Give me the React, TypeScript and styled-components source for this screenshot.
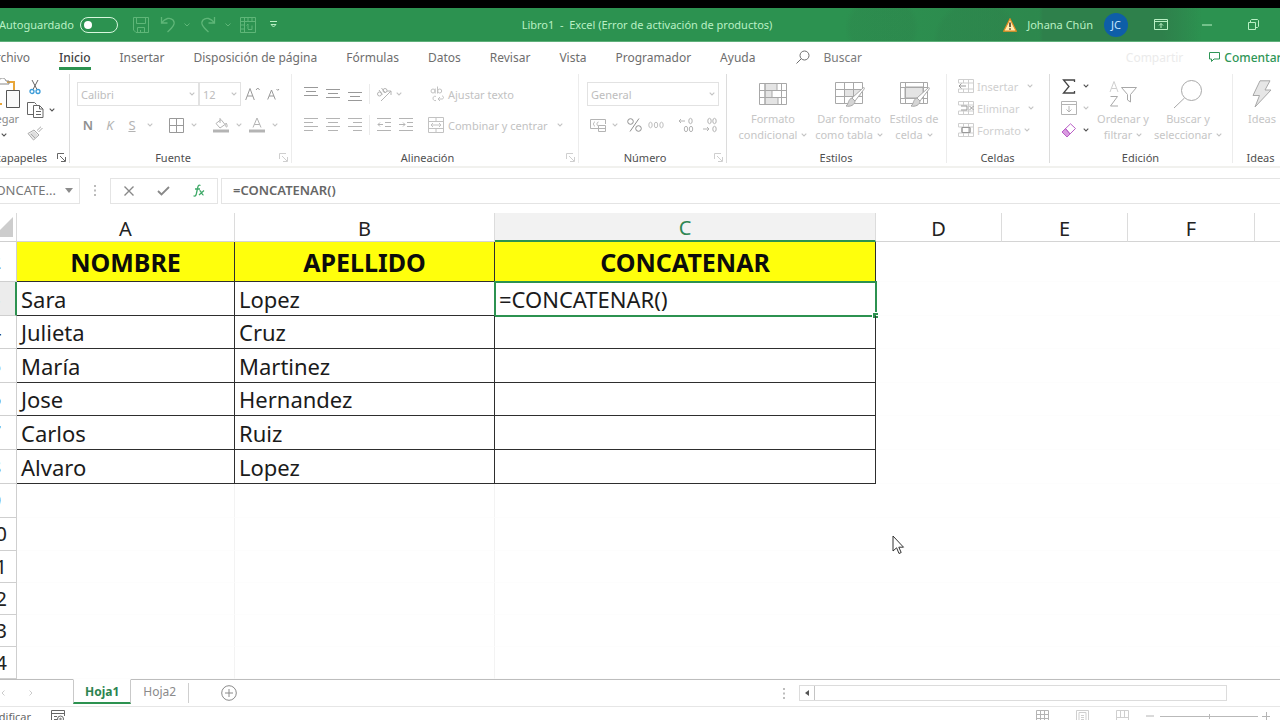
import React from 'react';
import styled, { createGlobalStyle, css } from 'styled-components';

const GREEN = '#2c9250';
const UI = '"Noto Sans", "Open Sans", sans-serif';

const Global = createGlobalStyle`
  *, *::before, *::after { box-sizing: border-box; }
  body { margin: 0; background: #fff; overflow: hidden; font-family: ${UI}; font-size: 12px; color: #555; }
  button, input, select { font: inherit; color: inherit; background: none; border: 0; padding: 0; margin: 0; }
  a { color: inherit; text-decoration: none; }
  svg { display: block; flex: none; }
`;

/* The window is a little larger than the visible screen and bleeds off its edges. */
const Screen = styled.div`
  height: 100vh;
  overflow: hidden;
  position: relative;
`;
const Window = styled.div`
  display: flex;
  flex-direction: column;
  width: calc(100% + 70px);
  height: calc(100vh + 7px);
  margin-left: -28px;
`;

/* Title bar */
const TopEdge = styled.div`
  flex: none;
  height: 8px;
  background: #000;
`;
const TitleBar = styled.header`
  flex: none;
  display: grid;
  grid-template-columns: 1fr auto 1fr;
  align-items: center;
  height: 34px;
  font-size: 11px;
  color: #b9f0c4;
  border-bottom: 1px solid #5fb07a;
  background:
    radial-gradient(circle at calc(100% - 440px) 20px, rgba(46, 120, 72, 0.2) 31px, transparent 37px),
    radial-gradient(circle at calc(100% - 345px) 34px, rgba(46, 120, 72, 0.2) 38px, transparent 44px),
    linear-gradient(90deg, transparent calc(100% - 283px), #2e804b calc(100% - 279px), #2e804b calc(100% - 160px), transparent calc(100% - 120px)),
    linear-gradient(90deg, ${GREEN} calc(100% - 480px), #2d884d calc(100% - 290px), ${GREEN} calc(100% - 120px));
`;
const QuickAccess = styled.div`
  display: flex;
  align-items: center;
  padding-left: 27px;
`;
const ToggleLabel = styled.label`
  display: flex;
  align-items: center;
  gap: 6px;
  margin-right: 12px;
`;
const Toggle = styled.input`
  appearance: none;
  display: flex;
  align-items: center;
  width: 38px;
  height: 16px;
  padding-left: 3px;
  border: 1px solid #d8f7de;
  border-radius: 8px;
  &::before {
    content: '';
    width: 8px;
    height: 8px;
    border-radius: 50%;
    background: #fff;
  }
`;
const TitleButton = styled.button<{ $w: number; $dim?: boolean }>`
  display: flex;
  align-items: center;
  justify-content: center;
  width: ${p => p.$w}px;
  height: 32px;
  color: ${p => (p.$dim ? '#5fb678' : '#b9f0c4')};
`;
const DocTitle = styled.h1`
  margin: 0;
  font-size: 11px;
  font-weight: 400;
  white-space: pre;
`;
const WindowSide = styled.div`
  display: flex;
  align-items: center;
  justify-content: flex-end;
`;
const User = styled.span`
  margin: 0 11px 0 10px;
`;
const Avatar = styled.span`
  display: flex;
  align-items: center;
  justify-content: center;
  width: 24px;
  height: 24px;
  margin-right: 10px;
  border-radius: 50%;
  background: #0e5ea8;
  color: #c5e4ff;
`;

/* Ribbon tabs */
const TabBar = styled.nav`
  flex: none;
  display: flex;
  align-items: center;
  gap: 29px;
  height: 30px;
  margin-bottom: 2px;
  padding: 0 24px 0 16px;
  color: #6e6e6e;
`;
const Tab = styled.a<{ $active?: boolean }>`
  display: flex;
  align-items: center;
  height: 26px;
  white-space: nowrap;
  border-top: 3px solid transparent;
  border-bottom: 3px solid transparent;
  ${p => p.$active && css`
    color: #3f3f3f;
    font-weight: 500;
    border-bottom-color: ${GREEN};
  `}
`;
const Search = styled.label`
  display: flex;
  align-items: center;
  gap: 13px;
  margin-left: 12px;
`;
const SearchInput = styled.input`
  width: 100px;
  outline: 0;
  &::placeholder { color: #7a7a7a; opacity: 1; }
`;
const TabActions = styled.div`
  display: flex;
  align-items: center;
  gap: 26px;
  margin-left: auto;
`;
const Action = styled.button<{ $faint?: boolean }>`
  display: flex;
  align-items: center;
  gap: 4px;
  color: ${p => (p.$faint ? '#ebebeb' : '#2f9657')};
  font-weight: ${p => (p.$faint ? 400 : 500)};
`;

/* Ribbon */
const Ribbon = styled.section`
  flex: none;
  display: flex;
  height: 94px;
  border-bottom: 2px solid #f1f1ee;
`;
const Group = styled.section<{ $w: number; $soft?: boolean }>`
  display: flex;
  flex-direction: column;
  flex: none;
  width: ${p => p.$w}px;
  height: 89px;
  border-right: 1px solid ${p => (p.$soft ? '#ececec' : '#dcdcdc')};
`;
const GroupBody = styled.div<{ $pad?: number; $gap?: number }>`
  flex: 1;
  display: flex;
  gap: ${p => p.$gap ?? 0}px;
  padding-left: ${p => p.$pad ?? 8}px;
`;
const Caption = styled.footer`
  display: flex;
  align-items: center;
  height: 16px;
  margin-bottom: -2px;
  padding-right: 1px;
  color: #4f4f4f;
`;
const CaptionText = styled.h2`
  flex: 1;
  margin: 0;
  font-size: 11px;
  font-weight: 400;
  text-align: center;
`;
const Stack = styled.div<{ $gap: number; $top: number }>`
  display: flex;
  flex-direction: column;
  gap: ${p => p.$gap}px;
  padding-top: ${p => p.$top}px;
`;
const Row = styled.div`
  display: flex;
  align-items: center;
  height: 22px;
`;
const Tool = styled.button<{ $w?: number; $color?: string; $left?: number }>`
  display: flex;
  align-items: center;
  justify-content: center;
  flex: none;
  width: ${p => p.$w ?? 22}px;
  height: 22px;
  margin-left: ${p => p.$left ?? 0}px;
  color: ${p => p.$color ?? '#b4b4b4'};
`;
const Letter = styled.span<{ $kind?: 'b' | 'i' | 'u' }>`
  font-size: 13px;
  font-weight: ${p => (p.$kind === 'b' ? 600 : 400)};
  font-style: ${p => (p.$kind === 'i' ? 'italic' : 'normal')};
  text-decoration: ${p => (p.$kind === 'u' ? 'underline' : 'none')};
`;
const Wide = styled.button<{ $color?: string }>`
  display: flex;
  align-items: center;
  gap: 3px;
  height: 22px;
  font-size: 11px;
  white-space: nowrap;
  color: ${p => p.$color ?? '#c2c2c2'};
`;
const ChevronBox = styled.span`
  display: flex;
  margin-left: 6px;
`;
const Divider = styled.span`
  width: 1px;
  height: 20px;
  margin: 0 3px;
  background: #ebebeb;
`;
const Picker = styled.label<{ $w: number }>`
  display: flex;
  align-items: center;
  width: ${p => p.$w}px;
  height: 24px;
  border: 1px solid #e2e2e2;
  color: #bdbdbd;
`;
const Select = styled.select`
  flex: 1;
  min-width: 0;
  height: 100%;
  padding-left: 3px;
  appearance: none;
  outline: 0;
  font-size: 11px;
`;
const Arrow = styled.span`
  display: flex;
  margin-right: 3px;
  pointer-events: none;
`;
const Big = styled.button<{ $w: number; $dark?: boolean }>`
  display: flex;
  flex-direction: column;
  align-items: center;
  width: ${p => p.$w}px;
  padding-top: 4px;
  font-size: 11px;
  line-height: 16px;
  white-space: nowrap;
  color: ${p => (p.$dark ? '#8a8a8a' : '#c6c6c6')};
`;
const BigIcon = styled.span`
  display: flex;
  align-items: center;
  justify-content: center;
  height: 32px;
  margin-bottom: 1px;
  color: #a8a8a8;
`;
const BigLine = styled.span`
  display: flex;
  align-items: center;
  gap: 4px;
  height: 16px;
`;

/* Formula bar */
const FormulaBar = styled.section`
  flex: none;
  display: flex;
  align-items: center;
  height: 45px;
  color: #777;
`;
const NameBox = styled.div`
  display: flex;
  align-items: center;
  width: 108px;
  height: 26px;
  padding-right: 6px;
  border: 1px solid #e4e4e4;
`;
const NameInput = styled.input`
  flex: 1;
  min-width: 0;
  height: 24px;
  padding: 0 9px 2px 0;
  text-align: right;
  outline: 0;
  font-size: 13px;
`;
const Grip = styled.span`
  display: flex;
  justify-content: center;
  width: 30px;
`;
const FormulaTools = styled.div`
  display: flex;
  align-items: center;
  justify-content: space-around;
  width: 108px;
  height: 26px;
  border: 1px solid #e4e4e4;
`;
const FormulaInput = styled.input`
  flex: 1;
  height: 26px;
  margin-left: 3px;
  padding: 0 0 2px 11px;
  border: 1px solid #e4e4e4;
  outline: 0;
  font-size: 13px;
  font-weight: 600;
  color: #666;
`;

/* Sheet */
const Sheet = styled.main`
  flex: 1;
  min-height: 0;
  overflow: hidden;
`;
const Grid = styled.table`
  width: 100%;
  table-layout: fixed;
  border-collapse: separate;
  border-spacing: 0;
  font-size: 22px;
  line-height: 28px;
  color: #1b1b1b;
`;
const Col = styled.col<{ $w?: number }>`
  width: ${p => (p.$w ? `${p.$w}px` : 'auto')};
`;
const TR = styled.tr<{ $h: number }>`
  height: ${p => p.$h}px;
`;
const Corner = styled.td`
  padding: 0 3px 4px 0;
  border-right: 1px solid #dadada;
  border-bottom: 1px solid #cfcfcf;
  vertical-align: bottom;
`;
const CornerMark = styled.span`
  display: block;
  width: 20px;
  height: 20px;
  margin-left: auto;
  background: #cdcdcd;
  clip-path: polygon(100% 0, 100% 100%, 0 100%);
`;
const ColHead = styled.th<{ $on?: boolean }>`
  padding: 3px 0 0;
  font-size: 20px;
  line-height: 24px;
  font-weight: 400;
  color: ${p => (p.$on ? '#2f8653' : '#222')};
  background: ${p => (p.$on ? '#f2f2f2' : '#fff')};
  border-right: 1px solid #dcdcdc;
  border-bottom: ${p => (p.$on ? `2px solid ${GREEN}` : '1px solid #d4d4d4')};
`;
const RowHead = styled.th<{ $on?: boolean }>`
  padding: 0 0 0 3px;
  font-size: 20px;
  line-height: 24px;
  font-weight: 400;
  color: ${p => (p.$on ? '#2f8653' : '#222')};
  background: ${p => (p.$on ? '#ececec' : '#fff')};
  border-bottom: 1px solid #cfcfcf;
  border-right: ${p => (p.$on ? `2px solid ${GREEN}` : '1px solid #cfcfcf')};
`;
const Cell = styled.td<{ $boxed?: boolean; $line?: boolean }>`
  position: relative;
  padding: 0 4px;
  white-space: nowrap;
  border-right: 1px solid ${p => (p.$boxed ? '#2e2e2e' : p.$line ? '#f3f3f3' : 'transparent')};
  border-bottom: 1px solid ${p => (p.$boxed ? '#2e2e2e' : '#fdfdfd')};
`;
const HeadCell = styled(Cell)`
  font-size: 25px;
  line-height: 30px;
  font-weight: 700;
  text-align: center;
  color: #0c0c0c;
  background: #ffff0c;
`;
const Selection = styled.span`
  position: absolute;
  inset: -1px -2px -2px -1px;
  border: 2px solid ${GREEN};
  &::after {
    content: '';
    position: absolute;
    right: -3px;
    bottom: -3px;
    width: 5px;
    height: 5px;
    background: ${GREEN};
    outline: 1px solid #fff;
  }
`;
const Pointer = styled.span`
  position: absolute;
  left: 892px;
  top: 535px;
`;

/* Sheet tabs */
const SheetBar = styled.nav`
  flex: none;
  display: flex;
  align-items: center;
  height: 28px;
  border-top: 1px solid #bdbdbd;
  border-bottom: 1px solid #e6e6e6;
  color: #8a8a8a;
`;
const SheetNav = styled.div`
  display: flex;
  gap: 18px;
  width: 101px;
  padding-left: 26px;
`;
const Nav = styled.button`
  display: flex;
  justify-content: center;
  width: 10px;
`;
const AddSheet = styled.button`
  display: flex;
  margin-left: 32px;
`;
const SheetTab = styled.button<{ $active?: boolean }>`
  height: 25px;
  margin-top: -3px;
  padding: 0 11px;
  white-space: nowrap;
  border: 1px solid transparent;
  border-bottom-width: 2px;
  ${p => p.$active && css`
    font-weight: 700;
    color: #2c8450;
    background: #fff;
    border-color: #fff #c9c9c9 ${GREEN};
  `}
`;
const TabEdge = styled.span`
  width: 1px;
  height: 20px;
  background: #cfcfcf;
`;
const Scroller = styled.div`
  display: flex;
  width: 428px;
  height: 16px;
  margin-right: 95px;
  border: 1px solid #dcdcdc;
`;
const ScrollButton = styled.button`
  display: flex;
  align-items: center;
  justify-content: center;
  width: 15px;
  border-right: 1px solid #c4c4c4;
  color: #555;
`;

/* Status bar */
const StatusBar = styled.footer`
  flex: none;
  display: flex;
  align-items: center;
  height: 20px;
  padding: 0 50px 2px 4px;
  color: #666;
  font-size: 11px;
`;
const Mode = styled.span`
  width: 55px;
  text-align: right;
  margin-right: 20px;
`;
const Views = styled.div`
  display: flex;
  align-items: center;
  margin-left: auto;
  color: #bdbdbd;
`;
const Zoom = styled.input`
  appearance: none;
  width: 98px;
  height: 1px;
  margin: 0 2px;
  background: #b9b9b9;
  &::-webkit-slider-thumb {
    appearance: none;
    width: 1px;
    height: 5px;
    background: #b9b9b9;
  }
`;

type IcoProps = { w: number; h?: number; sw?: number; children: React.ReactNode };
const Ico = ({ w, h = w, sw = 1, children }: IcoProps) => (
  <svg width={w} height={h} viewBox={`0 0 ${w} ${h}`} fill="none" stroke="currentColor" strokeWidth={sw} aria-hidden="true">
    {children}
  </svg>
);
const Chevron = ({ dark }: { dark?: boolean }) => (
  <svg width="6" height="4" viewBox="0 0 6 4" fill="none" stroke={dark ? '#555' : '#c4c4c4'} strokeWidth="1.1" aria-hidden="true">
    <path d="M.7.7 3 3 5.3.7" />
  </svg>
);
const Launcher = ({ dark }: { dark?: boolean }) => (
  <Tool $w={14} $color={dark ? '#666' : '#cfcfcf'} aria-label="Más opciones">
    <Ico w={9}><path d="M.5 6V.5H7M3 3l5 5M8.500 4v4.500H4" /></Ico>
  </Tool>
);
const Lines = ({ rows }: { rows: [number, number, number][] }) => (
  <Ico w={14} h={16}>{rows.map(([x, y, len]) => <path key={y} d={`M${x} ${y}.5h${len}`} />)}</Ico>
);
const Brush = () => (
  <g>
    <path d="M30 8c1-1 2 0 1 1.200L22 21l-3-3z" fill="#fff" />
    <path d="M19 18l3 3c0 4-5 6-9 5 3-2 2-7 6-8z" fill="#d5d5d5" />
  </g>
);

const ChevTool = ({ w = 14, dark }: { w?: number; dark?: boolean }) => (
  <Tool $w={w} aria-label="Abrir lista"><Chevron dark={dark} /></Tool>
);

const Clipboard = () => (
  <Group $w={98}>
    <GroupBody $pad={14} $gap={2}>
      <Big $w={36} $dark>
        <BigIcon>
          <Ico w={34} h={32}>
            <path d="M5 4h4M20 4h7v8M5 4v22h10" stroke="#e8a63a" strokeWidth="2" />
            <path d="M9 6V3h3c1-4 6-4 7 0h3v3z" stroke="#888" />
            <path d="M19.500 12.500h13v17h-13z" stroke="#555" fill="#fafafa" />
          </Ico>
        </BigIcon>
        <BigLine>Pegar</BigLine>
        <BigLine><Chevron dark /></BigLine>
      </Big>
      <Stack $gap={1} $top={2}>
        <Row>
          <Tool $color="#666" aria-label="Cortar">
            <Ico w={12} h={15}>
              <path d="M3 0l5 9.500M9 0L4 9.500" />
              <circle cx="3" cy="11.500" r="2" stroke="#3a9bd8" strokeWidth="1.300" />
              <circle cx="9" cy="11.500" r="2" stroke="#3a9bd8" strokeWidth="1.300" />
            </Ico>
          </Tool>
        </Row>
        <Row>
          <Tool $color="#666" aria-label="Copiar">
            <Ico w={17} h={16}>
              <path d="M6 12.500H.5V.5h7l2 2" />
              <path d="M6.500 3.500h6l3.500 3.500v8.500H6.500zM12.500 3.500V7H16" fill="#fff" />
              <path d="M9 9.500h5M9 12.500h5" />
            </Ico>
          </Tool>
          <ChevTool w={12} dark />
        </Row>
        <Row>
          <Tool $color="#a8a8a8" aria-label="Copiar formato">
            <Ico w={16} h={15}>
              <path d="M2 8l5-3 4 4-4 4z" fill="#dedede" stroke="none" />
              <path d="M14 .7L10 4.500M15.500 2L11.500 6M7 4l5 5M7 4L1 7.500 6.500 14 12 9M4 8l4 4" />
            </Ico>
          </Tool>
        </Row>
      </Stack>
    </GroupBody>
    <Caption><CaptionText>Portapapeles</CaptionText><Launcher dark /></Caption>
  </Group>
);

const FontGroup = () => (
  <Group $w={222} $soft>
    <GroupBody $pad={7}>
      <Stack $gap={9} $top={9}>
        <Row>
          <Picker $w={122}>
            <Select aria-label="Fuente" defaultValue="Calibri"><option>Calibri</option></Select>
            <Arrow><Chevron /></Arrow>
          </Picker>
          <Picker $w={42}>
            <Select aria-label="Tamaño de fuente" defaultValue="12"><option>12</option></Select>
            <Arrow><Chevron /></Arrow>
          </Picker>
          <Tool $color="#999" aria-label="Aumentar tamaño">
            <Ico w={15} h={14}><path d="M.7 13L5 1.500 9.300 13M2.200 9h5.600M11 3l1.800-2 1.800 2" /></Ico>
          </Tool>
          <Tool $w={20} $color="#999" aria-label="Disminuir tamaño">
            <Ico w={13} h={12}><path d="M.7 11.500L4.500 2l3.800 9.500M2 8h5M9.500 1l1.300 1.400L12 1" /></Ico>
          </Tool>
        </Row>
        <Row>
          <Tool $color="#909090" aria-label="Negrita"><Letter $kind="b">N</Letter></Tool>
          <Tool aria-label="Cursiva"><Letter $kind="i">K</Letter></Tool>
          <Tool aria-label="Subrayado"><Letter $kind="u">S</Letter></Tool>
          <ChevTool w={13} />
          <Tool $left={9} $color="#999" aria-label="Bordes">
            <Ico w={15}><path d="M.5.5h14v14H.5zM7.500.5v14M.5 7.500h14" /></Ico>
          </Tool>
          <ChevTool />
          <Tool $left={9} aria-label="Color de relleno">
            <Ico w={16}>
              <path d="M3 6.500l5-4 4 5-5 3.500zM7 1v5M13 6c1.500 2 1.500 4 .5 4s-1-2-.5-4" />
              <path d="M0 14h16" strokeWidth="3" />
            </Ico>
          </Tool>
          <ChevTool />
          <Tool aria-label="Color de fuente">
            <Ico w={16}>
              <path d="M4 10.500L8 1l4 9.500M5.300 7.500h5.400" />
              <path d="M0 14h16" strokeWidth="3" />
            </Ico>
          </Tool>
          <ChevTool />
        </Row>
      </Stack>
    </GroupBody>
    <Caption><CaptionText>Fuente</CaptionText><Launcher /></Caption>
  </Group>
);

const AlignGroup = () => (
  <Group $w={287} $soft>
    <GroupBody $gap={11}>
      <Stack $gap={9} $top={9}>
        <Row>
          <Tool $color="#999" aria-label="Alinear arriba"><Lines rows={[[0, 1, 14], [2, 5, 10], [0, 9, 14]]} /></Tool>
          <Tool $color="#999" aria-label="Alinear en medio"><Lines rows={[[0, 3, 14], [2, 7, 10], [0, 11, 14]]} /></Tool>
          <Tool $color="#999" aria-label="Alinear abajo"><Lines rows={[[0, 6, 14], [2, 10, 10], [0, 14, 14]]} /></Tool>
          <Divider />
          <Tool aria-label="Orientación">
            <Ico w={16}>
              <path d="M5 15L15 5M11 5h4v4" />
              <circle cx="3.500" cy="8" r="2" /><path d="M3 4l3.500 4.500M5.500 2l4 5" /><circle cx="9" cy="4.500" r="2" />
            </Ico>
          </Tool>
          <ChevTool w={8} />
        </Row>
        <Row>
          <Tool aria-label="Alinear a la izquierda"><Lines rows={[[0, 1, 14], [0, 5, 9], [0, 9, 14], [0, 13, 9]]} /></Tool>
          <Tool aria-label="Centrar"><Lines rows={[[0, 1, 14], [2, 5, 10], [0, 9, 14], [2, 13, 10]]} /></Tool>
          <Tool aria-label="Alinear a la derecha"><Lines rows={[[0, 1, 14], [5, 5, 9], [0, 9, 14], [5, 13, 9]]} /></Tool>
          <Divider />
          <Tool aria-label="Disminuir sangría">
            <Ico w={14} h={16}><path d="M0 1.500h14M8 5.500h6M8 9.500h6M0 13.500h14M6 7.500H1M3 5.500l-2 2 2 2" /></Ico>
          </Tool>
          <Tool aria-label="Aumentar sangría">
            <Ico w={14} h={16}><path d="M0 1.500h14M8 5.500h6M8 9.500h6M0 13.500h14M0 7.500h6M4 5.500l2 2-2 2" /></Ico>
          </Tool>
        </Row>
      </Stack>
      <Stack $gap={9} $top={9}>
        <Wide>
          <Ico w={17} h={16}>
            <circle cx="5" cy="5" r="2" /><path d="M7.200 2.500v5M9.500.5v7" /><circle cx="11.700" cy="5" r="2" />
            <path d="M8 10.500c-4-1.500-4 5 0 4M10 13h4c2 0 2-3 0-3M12 11l-2 2 2 2" />
          </Ico>
          Ajustar texto
        </Wide>
        <Wide>
          <Ico w={17} h={16}>
            <path d="M.5.5h15v15H.5zM.5 4.500h15M.5 11.500h15M8 .5v4M8 11.500v4M3 8h10M5 6L3 8l2 2M11 6l2 2-2 2" />
          </Ico>
          Combinar y centrar
          <ChevronBox><Chevron /></ChevronBox>
        </Wide>
      </Stack>
    </GroupBody>
    <Caption><CaptionText>Alineación</CaptionText><Launcher /></Caption>
  </Group>
);

const NumberGroup = () => (
  <Group $w={148}>
    <GroupBody>
      <Stack $gap={9} $top={9}>
        <Row>
          <Picker $w={132}>
            <Select aria-label="Formato de número" defaultValue="General"><option>General</option></Select>
            <Arrow><Chevron /></Arrow>
          </Picker>
        </Row>
        <Row>
          <Tool aria-label="Formato de contabilidad">
            <Ico w={16} h={13}>
              <path d="M8 9.500H.5v-9h15V5M5 3c-2 0-2 4 0 4M8.500 3c-2 0-2 4 0 4M8.500 6.500h7v6h-7zM8.500 9.500h7" />
            </Ico>
          </Tool>
          <ChevTool w={12} />
          <Tool $left={2} $color="#8f8f8f" aria-label="Porcentaje">
            <Ico w={15} h={14}><circle cx="3.500" cy="3.500" r="2.800" /><circle cx="11.500" cy="10.500" r="2.800" /><path d="M12 .5L3 13.500" /></Ico>
          </Tool>
          <Tool $color="#c0c0c0" aria-label="Millares">
            <Ico w={16} h={8}><ellipse cx="2.500" cy="4" rx="1.700" ry="2.800" /><ellipse cx="8" cy="4" rx="1.700" ry="2.800" /><ellipse cx="13.500" cy="4" rx="1.700" ry="2.800" /></Ico>
          </Tool>
          <Tool $left={8} aria-label="Aumentar decimales">
            <Ico w={16}><path d="M1 4h6M3 2L1 4l2 2" /><ellipse cx="12.500" cy="4" rx="1.700" ry="2.700" /><ellipse cx="8" cy="12" rx="1.700" ry="2.700" /><ellipse cx="13" cy="12" rx="1.700" ry="2.700" /></Ico>
          </Tool>
          <Tool $left={2} aria-label="Disminuir decimales">
            <Ico w={16}><path d="M1 12h6M5 10l2 2-2 2" /><ellipse cx="7.500" cy="4" rx="1.700" ry="2.700" /><ellipse cx="12.500" cy="4" rx="1.700" ry="2.700" /><ellipse cx="12.500" cy="12" rx="1.700" ry="2.700" /></Ico>
          </Tool>
        </Row>
      </Stack>
    </GroupBody>
    <Caption><CaptionText>Número</CaptionText><Launcher /></Caption>
  </Group>
);

const StylesGroup = () => (
  <Group $w={220} $soft>
    <GroupBody $pad={10} $gap={3}>
      <Big $w={72}>
        <BigIcon>
          <Ico w={28} h={22}>
            <path d="M6 .5h12v7H6zM6 7.500h7v7H6zM6 14.500h13v7H6z" fill="#e4e4e4" />
            <path d="M.5.5h27v21H.5zM.5 7.500h27M.5 14.500h27M6 .5v21M22.500 .5v21" />
          </Ico>
        </BigIcon>
        <BigLine>Formato</BigLine>
        <BigLine>condicional <Chevron /></BigLine>
      </Big>
      <Big $w={74}>
        <BigIcon>
          <Ico w={32} h={28}>
            <path d="M11 10h17v7H11z" fill="#e4e4e4" stroke="none" />
            <path d="M2.500 2.500h27v21h-27zM2.500 9.500h27M2.500 16.500h27M11.500 2.500v21M20.500 2.500v21" />
            <Brush />
          </Ico>
        </BigIcon>
        <BigLine>Dar formato</BigLine>
        <BigLine>como tabla <Chevron /></BigLine>
      </Big>
      <Big $w={50}>
        <BigIcon>
          <Ico w={32} h={28}>
            <path d="M7 7h18v11H7z" fill="#e4e4e4" />
            <path d="M2.500 2.500h27v21h-27zM2.500 7.500h27M2.500 18.500h27M7.500 2.500v21M25.500 2.500v21" />
            <Brush />
          </Ico>
        </BigIcon>
        <BigLine>Estilos de</BigLine>
        <BigLine>celda <Chevron /></BigLine>
      </Big>
    </GroupBody>
    <Caption><CaptionText>Estilos</CaptionText></Caption>
  </Group>
);

const CellIcon = ({ extra }: { extra: string }) => (
  <Ico w={16} h={14}>
    <path d="M.5 4V.5h15v13H.5V10M.5 4h15M.5 10h15M5.500.5V4M10.500.5v13M5.500 10v3.500" />
    <path d={extra} stroke="#999" />
  </Ico>
);

const CellsGroup = () => (
  <Group $w={103}>
    <GroupBody $pad={11}>
      <Stack $gap={0} $top={1}>
        <Wide $color="#cfcfcf"><CellIcon extra="M8 7H1M3.500 4.500L1 7l2.500 2.500" />Insertar<ChevronBox><Chevron /></ChevronBox></Wide>
        <Wide $color="#cfcfcf"><CellIcon extra="M3 5h6v4H3M11.500 5l4 4M15.500 5l-4 4" />Eliminar<ChevronBox><Chevron /></ChevronBox></Wide>
        <Wide $color="#cfcfcf"><CellIcon extra="M4 4.500h8v5H4zM4 4.500v5M12 4.500v5" />Formato<Chevron /></Wide>
      </Stack>
    </GroupBody>
    <Caption><CaptionText>Celdas</CaptionText></Caption>
  </Group>
);

const EditGroup = () => (
  <Group $w={183} $soft>
    <GroupBody>
      <Stack $gap={0} $top={1}>
        <Row>
          <Tool $color="#444" aria-label="Autosuma"><Ico w={14} h={15} sw={1.3}><path d="M12.500 3V1H1.500L7 7.500 1.500 14h11v-2" /></Ico></Tool>
          <ChevTool w={12} dark />
        </Row>
        <Row>
          <Tool aria-label="Rellenar"><Ico w={16} h={14}><path d="M.5.5h15v13H.5zM.5 3.500h15M8 5v6M5.500 8.500L8 11l2.500-2.500" /></Ico></Tool>
          <ChevTool w={12} />
        </Row>
        <Row>
          <Tool $color="#b95fc6" aria-label="Borrar">
            <Ico w={16} h={15}>
              <path d="M1 9l3.500-3.500L9 11l-3 3z" fill="#d99be0" />
              <path d="M1 9L9.500.8 14.500 5.500 6 14z" />
              <path d="M4.500 5.500L9 11" />
            </Ico>
          </Tool>
          <ChevTool w={12} dark />
        </Row>
      </Stack>
      <Big $w={62}>
        <BigIcon>
          <Ico w={28} h={28}>
            <path d="M1 12L5 1.500 9 12M2.500 8.500h5" stroke="#cfcfcf" />
            <path d="M1.500 16.500h7L1.500 26h7.500M12.500 7.500h15l-6 7V22l-3-2v-5.500z" />
          </Ico>
        </BigIcon>
        <BigLine>Ordenar y</BigLine>
        <BigLine>filtrar <Chevron /></BigLine>
      </Big>
      <Big $w={68}>
        <BigIcon><Ico w={30} h={30}><circle cx="18.500" cy="11.500" r="10" /><path d="M11.500 19L1 29" /></Ico></BigIcon>
        <BigLine>Buscar y</BigLine>
        <BigLine>seleccionar <Chevron /></BigLine>
      </Big>
    </GroupBody>
    <Caption><CaptionText>Edición</CaptionText></Caption>
  </Group>
);

const IdeasGroup = () => (
  <Group $w={57} $soft>
    <GroupBody $pad={3}>
      <Big $w={52}>
        <BigIcon><Ico w={22} h={28}><path d="M9 .8h10L14 10h6L4 27l4.500-11.500H2z" fill="#e6e6e6" /></Ico></BigIcon>
        <BigLine>Ideas</BigLine>
      </Big>
    </GroupBody>
    <Caption><CaptionText>Ideas</CaptionText></Caption>
  </Group>
);

const tabs = ['Archivo', 'Inicio', 'Insertar', 'Disposición de página', 'Fórmulas', 'Datos', 'Revisar', 'Vista', 'Programador', 'Ayuda'];
const columns: [string, number | undefined][] = [['A', 218], ['B', 260], ['C', 381], ['D', 126], ['E', 126], ['F', 127], ['G', undefined]];
const people: { h: number; first: string; last: string; formula?: string }[] = [
  { h: 34, first: 'Sara', last: 'Lopez', formula: '=CONCATENAR()' },
  { h: 33, first: 'Julieta', last: 'Cruz' },
  { h: 34, first: 'María', last: 'Martinez' },
  { h: 33, first: 'Jose', last: 'Hernandez' },
  { h: 34, first: 'Carlos', last: 'Ruiz' },
  { h: 34, first: 'Alvaro', last: 'Lopez' },
];
const emptyRows: [number, number][] = [[9, 34], [10, 33], [11, 32], [12, 32], [13, 32], [14, 32]];

const Rest = ({ from }: { from: number }) => (
  <>{columns.slice(from).map(([name], i) => <Cell key={name} $line={from + i < 2} />)}</>
);

export default function App() {
  return (
    <Screen>
      <Global />
      <Window>
        <TopEdge />
        <TitleBar>
          <QuickAccess>
            <ToggleLabel>Autoguardado<Toggle type="checkbox" /></ToggleLabel>
            <TitleButton $w={22} $dim aria-label="Guardar">
              <Ico w={16}><path d="M.5.5h15v15H3l-2.500-2.500zM3.500.5v6h9v-6M4.500 15.500v-5h7v5M7.500 13v2.500" /></Ico>
            </TitleButton>
            <TitleButton $w={32} $dim aria-label="Deshacer">
              <Ico w={16} h={17} sw={1.3}><path d="M1.500 1v6h6M1.500 7C5 2 10 1 13 4c3 3.500 0 7-5.500 12" /></Ico>
            </TitleButton>
            <TitleButton $w={6} $dim aria-label="Opciones de deshacer"><Ico w={6} h={4}><path d="M.5.5L3 3 5.500.5" /></Ico></TitleButton>
            <TitleButton $w={36} $dim aria-label="Rehacer">
              <Ico w={16} h={17} sw={1.3}><path d="M14.500 1v6h-6M14.500 7C11 2 6 1 3 4c-3 3.500 0 7 5.500 12" /></Ico>
            </TitleButton>
            <TitleButton $w={4} $dim aria-label="Opciones de rehacer"><Ico w={6} h={4}><path d="M.5.5L3 3 5.500.5" /></Ico></TitleButton>
            <TitleButton $w={36} $dim aria-label="Tabla dinámica">
              <Ico w={16}><path d="M.5.5h15v15H.5zM.5 4.500h15M4.500.5v15M8 .5v4M12 .5v4M.5 8h4M.5 12h4M8 7v5M6.500 8.500L8 7M8 12.500h4v-4" /></Ico>
            </TitleButton>
            <TitleButton $w={16} aria-label="Personalizar barra"><Ico w={7} h={7}><path d="M0 .5h7M1 3.500L3.500 6 6 3.500z" /></Ico></TitleButton>
          </QuickAccess>
          <DocTitle>{'Libro1  -  Excel (Error de activación de productos)'}</DocTitle>
          <WindowSide>
            <svg width="14" height="14" viewBox="0 0 14 14" role="img" aria-label="Aviso">
              <path d="M7 .8L13.300 13.200H.7z" fill="#ffedb0" stroke="#e58a1f" strokeWidth="1.200" />
              <path d="M7 4.500v4.500M7 10.300v1.500" stroke="#3d3220" strokeWidth="1.500" />
            </svg>
            <User>Johana Chún</User>
            <Avatar>JC</Avatar>
            <TitleButton $w={46} aria-label="Opciones de la cinta"><Ico w={14} h={11}><path d="M.5.5h13v10H.5zM.5 2.500h13M7 9V4.500M5 6.500l2-2 2 2" /></Ico></TitleButton>
            <TitleButton $w={46} aria-label="Minimizar"><Ico w={10} h={2}><path d="M0 1h10" /></Ico></TitleButton>
            <TitleButton $w={46} aria-label="Restaurar"><Ico w={11}><path d="M.5 3.500h7v7h-7zM2.500 3.500v-2l1-1h6l1 1v6l-1 1h-2" /></Ico></TitleButton>
            <TitleButton $w={46} aria-label="Cerrar"><Ico w={10}><path d="M0 0l10 10M10 0L0 10" /></Ico></TitleButton>
          </WindowSide>
        </TitleBar>

        <TabBar>
          {tabs.map(name => <Tab key={name} href="#" $active={name === 'Inicio'}>{name}</Tab>)}
          <Search>
            <Ico w={14}><circle cx="8.500" cy="5.500" r="4.500" /><path d="M5.300 8.700L.5 13.500" /></Ico>
            <SearchInput aria-label="Buscar" placeholder="Buscar" />
          </Search>
          <TabActions>
            <Action $faint>Compartir</Action>
            <Action><Ico w={11} h={11}><path d="M.5.5h10v6.500H5L2.500 9.500V7h-2z" /></Ico>Comentarios</Action>
          </TabActions>
        </TabBar>

        <Ribbon>
          <Clipboard />
          <FontGroup />
          <AlignGroup />
          <NumberGroup />
          <StylesGroup />
          <CellsGroup />
          <EditGroup />
          <IdeasGroup />
        </Ribbon>

        <FormulaBar>
          <NameBox>
            <NameInput aria-label="Cuadro de nombres" defaultValue="CONCATE..." />
            <svg width="8" height="5" viewBox="0 0 8 5" aria-hidden="true"><path d="M0 0h8L4 5z" fill="#8c8c8c" /></svg>
          </NameBox>
          <Grip><Ico w={2} h={11} sw={2}><path d="M1 0v11" strokeDasharray="2 2.500" stroke="#bbb" /></Ico></Grip>
          <FormulaTools>
            <Tool $color="#888" aria-label="Cancelar"><Ico w={10} sw={1.4}><path d="M.5.5l9 9M9.500.5l-9 9" /></Ico></Tool>
            <Tool $color="#888" aria-label="Introducir"><Ico w={13} h={10} sw={1.8}><path d="M1 5l3.500 3.500L12 1" /></Ico></Tool>
            <Tool $color="#3fa968" aria-label="Insertar función">
              <Ico w={12} h={13} sw={1.3}><path d="M7.500 1.500C5.500.5 5 2 4.500 4.500L3.300 10c-.5 2-1.500 2.500-2.800 1.800M2 5h5M6.500 6.500c2 0 2 4.500 4 4.500M11 6.500L6 11" /></Ico>
            </Tool>
          </FormulaTools>
          <FormulaInput aria-label="Barra de fórmulas" defaultValue="=CONCATENAR()" />
        </FormulaBar>

        <Sheet>
          <Grid>
            <colgroup>
              <Col $w={45} />
              {columns.map(([name, w]) => <Col key={name} $w={w} />)}
            </colgroup>
            <thead>
              <TR $h={29}>
                <Corner><CornerMark /></Corner>
                {columns.map(([name]) => <ColHead key={name} scope="col" $on={name === 'C'}>{name}</ColHead>)}
              </TR>
            </thead>
            <tbody>
              <TR $h={40}>
                <RowHead scope="row">2</RowHead>
                <HeadCell $boxed>NOMBRE</HeadCell>
                <HeadCell $boxed>APELLIDO</HeadCell>
                <HeadCell $boxed>CONCATENAR</HeadCell>
                <Rest from={3} />
              </TR>
              {people.map((p, i) => (
                <TR key={i} $h={p.h}>
                  <RowHead scope="row" $on={!!p.formula}>{i + 3}</RowHead>
                  <Cell $boxed>{p.first}</Cell>
                  <Cell $boxed>{p.last}</Cell>
                  <Cell $boxed>{p.formula}{p.formula && <Selection />}</Cell>
                  <Rest from={3} />
                </TR>
              ))}
              {emptyRows.map(([n, h]) => (
                <TR key={n} $h={h}>
                  <RowHead scope="row">{n}</RowHead>
                  <Rest from={0} />
                </TR>
              ))}
            </tbody>
          </Grid>
        </Sheet>

        <SheetBar>
          <SheetNav>
            <Nav aria-label="Hoja anterior"><Ico w={4} h={6}><path d="M3.500.5L1 3l2.500 2.500" stroke="#ccc" /></Ico></Nav>
            <Nav aria-label="Hoja siguiente"><Ico w={4} h={6}><path d="M.5.5L3 3 .5 5.500" stroke="#ccc" /></Ico></Nav>
          </SheetNav>
          <SheetTab $active>Hoja1</SheetTab>
          <SheetTab>Hoja2</SheetTab>
          <TabEdge />
          <AddSheet aria-label="Hoja nueva"><Ico w={16}><circle cx="8" cy="8" r="7.300" /><path d="M8 4v8M4 8h8" /></Ico></AddSheet>
          <Views>
            <Grip><Ico w={2} h={11} sw={2}><path d="M1 0v11" strokeDasharray="2 2.500" /></Ico></Grip>
            <Scroller>
              <ScrollButton aria-label="Desplazar a la izquierda"><svg width="4" height="6" viewBox="0 0 4 6" aria-hidden="true"><path d="M4 0v6L0 3z" fill="currentColor" /></svg></ScrollButton>
            </Scroller>
          </Views>
        </SheetBar>

        <StatusBar>
          <Mode>Modificar</Mode>
          <Ico w={14} h={13}><path d="M.5 12V.5h13V6M.5 3.500h13M3 6.500h3M3 9.500h3" /><circle cx="9.500" cy="9" r="3" /><circle cx="9.500" cy="9" r=".8" /></Ico>
          <Views>
            <Tool $w={40} aria-label="Normal"><Ico w={13} h={13}><path d="M.5.5h12v12H.5zM4.500.5v12M8.500.5v12M.5 4.500h12M.5 8.500h12" /></Ico></Tool>
            <Tool $w={40} $color="#cfcfcf" aria-label="Diseño de página"><Ico w={13} h={13}><path d="M.5.5h12v12H.5zM3 2.500h7v10H3zM5 5.500h3M5 7.500h3M5 9.500h3" /></Ico></Tool>
            <Tool $w={40} $color="#cfcfcf" aria-label="Vista previa de salto de página"><Ico w={13} h={13}><path d="M.5 12V.5h12V12M.5 7.500h12M4.500.5v7M8.500.5v7" /></Ico></Tool>
            <Tool $w={16} aria-label="Alejar"><Ico w={8} h={2}><path d="M0 1h8" /></Ico></Tool>
            <Zoom type="range" aria-label="Zoom" defaultValue={50} />
            <Tool $w={12} aria-label="Acercar"><Ico w={8}><path d="M0 4.500h8M4.500 0v8" /></Ico></Tool>
          </Views>
        </StatusBar>
      </Window>
      <Pointer>
        <svg width="13" height="20" viewBox="0 0 13 20" aria-hidden="true">
          <path d="M1 1v15l3.600-3.200L7 18.500l2.200-1-2.400-5.300h4.700z" fill="#fff" stroke="#333" />
        </svg>
      </Pointer>
    </Screen>
  );
}
